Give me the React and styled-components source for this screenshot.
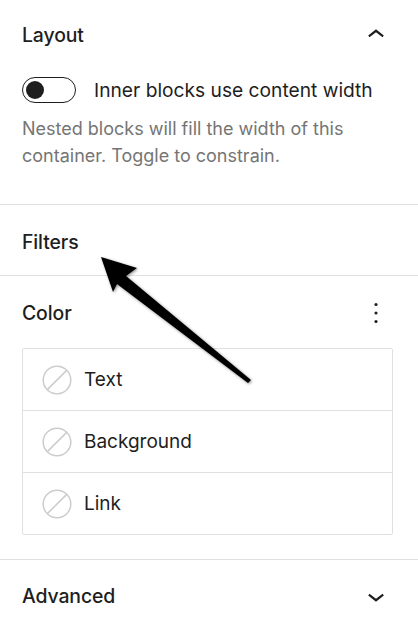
import React, { useState } from 'react';
import styled, { createGlobalStyle } from 'styled-components';

const GlobalStyle = createGlobalStyle`
  html, body {
    margin: 0;
    padding: 0;
    background: #ffffff;
  }
  body {
    font-family: Inter, "Noto Sans", "Liberation Sans", sans-serif;
    color: #1e1e1e;
    -webkit-font-smoothing: antialiased;
  }
`;

const Sidebar = styled.div`
  position: relative;
  width: 418px;
  height: 638px;
  overflow: hidden;
  background: #ffffff;
`;

const Panel = styled.section`
  padding: ${props => props.$top || 23}px 22px ${props => props.$bottom || 0}px;
  border-bottom: ${props => (props.$last ? 'none' : '1px solid #e0e0e0')};
`;

const PanelHeader = styled.div`
  display: flex;
  align-items: center;
  justify-content: space-between;
  height: 26px;
`;

const PanelTitle = styled.h2`
  margin: 0;
  font-size: 19.4px;
  font-weight: 500;
  color: #1e1e1e;
  letter-spacing: -0.1px;
`;

const IconButton = styled.button`
  display: flex;
  align-items: center;
  justify-content: center;
  width: 34px;
  height: 34px;
  margin-right: 3px;
  padding: 0;
  border: none;
  background: none;
  color: #1e1e1e;
  cursor: pointer;

  svg {
    fill: currentColor;
  }
`;

const ToggleRow = styled.label`
  display: flex;
  align-items: center;
  gap: 18px;
  margin-top: 29px;
  cursor: pointer;
`;

const Track = styled.span`
  position: relative;
  box-sizing: border-box;
  width: 54px;
  height: 26px;
  border: 1.5px solid #1e1e1e;
  border-radius: 13px;
  background: ${props => (props.$on ? '#1e1e1e' : '#ffffff')};
  flex-shrink: 0;
`;

const Knob = styled.span`
  position: absolute;
  top: 2.5px;
  left: ${props => (props.$on ? '30px' : '3px')};
  width: 18px;
  height: 18px;
  border-radius: 50%;
  background: ${props => (props.$on ? '#ffffff' : '#1e1e1e')};
`;

const ToggleLabel = styled.span`
  font-size: 19.2px;
  font-weight: 400;
  color: #1e1e1e;
`;

const Help = styled.p`
  margin: 12px 0 0;
  font-size: 18px;
  line-height: 27px;
  color: #757575;
`;

const ColorList = styled.div`
  margin: 22px 3px 0 0;
  border: 1px solid #e0e0e0;
  border-radius: 2px;
`;

const ColorItem = styled.div`
  display: flex;
  align-items: center;
  gap: 12px;
  height: 61px;
  padding: 0 19px;
  border-top: ${props => (props.$first ? 'none' : '1px solid #e0e0e0')};
  font-size: 19px;
  color: #1e1e1e;
`;

const Overlay = styled.svg`
  position: absolute;
  top: 0;
  left: 0;
  pointer-events: none;
  filter: drop-shadow(1px 1px 1.5px rgba(0, 0, 0, 0.45));
`;

const ChevronUp = () => (
  <svg width="34" height="34" viewBox="0 0 24 24">
    <path d="M6.5 12.4L12 8l5.5 4.4-.9 1.2L12 10l-4.6 3.6-.9-1.2z" />
  </svg>
);

const ChevronDown = () => (
  <svg width="34" height="34" viewBox="0 0 24 24">
    <path d="M17.5 11.6L12 16l-5.5-4.4.9-1.2L12 14l4.6-3.6 1 1.2z" />
  </svg>
);

const MoreVertical = () => (
  <svg width="34" height="34" viewBox="0 0 24 24">
    <circle cx="12" cy="6" r="1.1" />
    <circle cx="12" cy="12" r="1.1" />
    <circle cx="12" cy="18" r="1.1" />
  </svg>
);

const NoColor = () => (
  <svg width="30" height="30" viewBox="0 0 30 30">
    <circle cx="15" cy="15" r="13.8" fill="none" stroke="#cccccc" strokeWidth="1.5" />
    <line x1="5.6" y1="24.4" x2="24.4" y2="5.6" stroke="#cccccc" strokeWidth="1.5" />
  </svg>
);

const colorItems = ['Text', 'Background', 'Link'];

function App() {
  const [constrained, setConstrained] = useState(false);

  return (
    <Sidebar>
      <GlobalStyle />

      <Panel $top={22} $bottom={35}>
        <PanelHeader>
          <PanelTitle>Layout</PanelTitle>
          <IconButton aria-label="Collapse">
            <ChevronUp />
          </IconButton>
        </PanelHeader>
        <ToggleRow onClick={() => setConstrained(!constrained)}>
          <Track $on={constrained}>
            <Knob $on={constrained} />
          </Track>
          <ToggleLabel>Inner blocks use content width</ToggleLabel>
        </ToggleRow>
        <Help>
          Nested blocks will fill the width of this container. Toggle to constrain.
        </Help>
      </Panel>

      <Panel $top={24} $bottom={20}>
        <PanelHeader>
          <PanelTitle>Filters</PanelTitle>
        </PanelHeader>
      </Panel>

      <Panel $top={24} $bottom={24}>
        <PanelHeader>
          <PanelTitle>Color</PanelTitle>
          <IconButton aria-label="Color options">
            <MoreVertical />
          </IconButton>
        </PanelHeader>
        <ColorList>
          {colorItems.map((label, i) => (
            <ColorItem key={label} $first={i === 0}>
              <NoColor />
              {label}
            </ColorItem>
          ))}
        </ColorList>
      </Panel>

      <Panel $top={23} $last>
        <PanelHeader>
          <PanelTitle>Advanced</PanelTitle>
          <IconButton aria-label="Expand">
            <ChevronDown />
          </IconButton>
        </PanelHeader>
      </Panel>

      {/* annotation arrow drawn over the panel */}
      <Overlay width="418" height="638" viewBox="0 0 418 638">
        <polygon
          points="101,257 137,268 126,276 251,380 248,383 117,284 113,292"
          fill="#000000"
        />
      </Overlay>
    </Sidebar>
  );
}

export default App;
